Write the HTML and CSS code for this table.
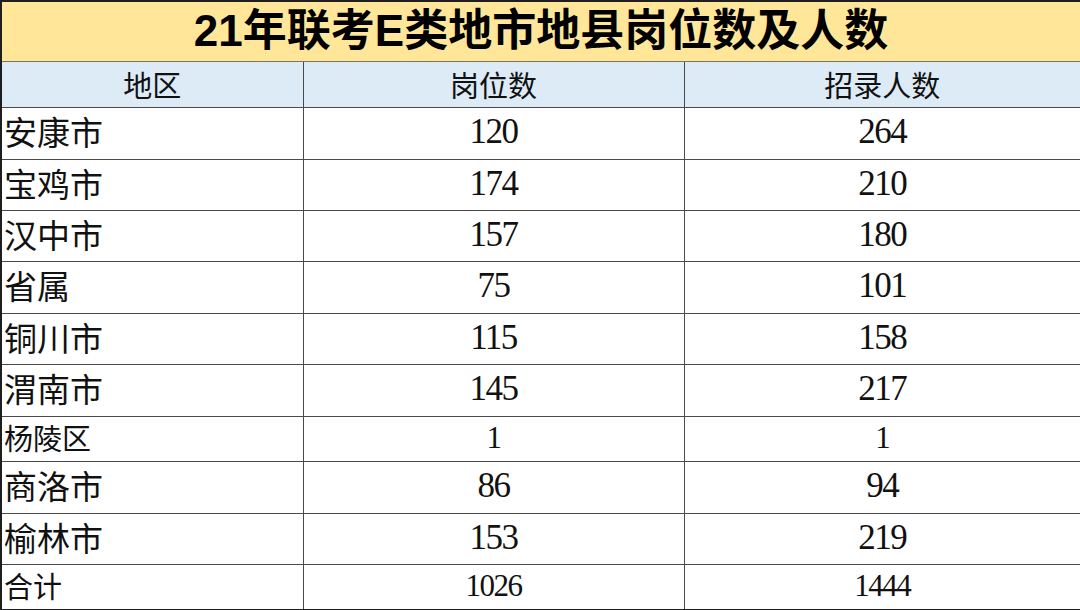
FILE: index.html
```html
<!DOCTYPE html>
<html lang="zh-CN">
<head>
<meta charset="utf-8">
<title>21年联考E类地市地县岗位数及人数</title>
<link rel="stylesheet" href="styles.css">
</head>
<body>
<table class="sheet">
  <colgroup>
    <col class="c-region">
    <col class="c-posts">
    <col class="c-people">
  </colgroup>
  <tr class="title-row"><th colspan="3" class="title">21年联考E类地市地县岗位数及人数</th></tr>
  <tr class="head-row"><th>地区</th><th>岗位数</th><th>招录人数</th></tr>
  <tr class="h52"><td class="name">安康市</td><td class="num">120</td><td class="num">264</td></tr>
  <tr class="h51"><td class="name">宝鸡市</td><td class="num">174</td><td class="num">210</td></tr>
  <tr class="h51"><td class="name">汉中市</td><td class="num">157</td><td class="num">180</td></tr>
  <tr class="h52"><td class="name">省属</td><td class="num">75</td><td class="num">101</td></tr>
  <tr class="h51"><td class="name">铜川市</td><td class="num">115</td><td class="num">158</td></tr>
  <tr class="h52"><td class="name">渭南市</td><td class="num">145</td><td class="num">217</td></tr>
  <tr class="h45 small"><td class="name">杨陵区</td><td class="num">1</td><td class="num">1</td></tr>
  <tr class="h52"><td class="name">商洛市</td><td class="num">86</td><td class="num">94</td></tr>
  <tr class="h51"><td class="name">榆林市</td><td class="num">153</td><td class="num">219</td></tr>
  <tr class="h46 small"><td class="name">合计</td><td class="num">1026</td><td class="num">1444</td></tr>
</table>
</body>
</html>
```

FILE: styles.css
```css
html, body {
  margin: 0;
  padding: 0;
  background: #ffffff;
}

.sheet {
  width: 1080px;
  border-collapse: collapse;
  table-layout: fixed;
  border: 2px solid #1e1e1e;
  font-family: "Liberation Serif", "Noto Sans CJK SC", serif;
  color: #111;
}

.c-region { width: 302px; }
.c-posts { width: 381px; }
.c-people { width: 397px; }

.sheet th,
.sheet td {
  border: 1px solid #4a4a4a;
  padding: 0 0 2px 0;
  text-align: center;
  vertical-align: middle;
  font-weight: normal;
  line-height: 1.2;
  white-space: nowrap;
}

.title-row { height: 60px; }

.sheet th.title {
  background: #ffe699;
  font-family: "Liberation Sans", "Noto Sans CJK SC", sans-serif;
  font-weight: 700;
  font-size: 44px;
  line-height: 1.2;
  color: #000;
  padding: 0;
  border-bottom: 1px solid #7d7560;
}

.head-row { height: 46px; }

.head-row th {
  background: #ddebf7;
  font-family: "Noto Sans CJK SC", sans-serif;
  font-size: 29px;
  font-weight: 400;
  padding: 0;
}

.h52 { height: 52px; }
.h51 { height: 51px; }
.h46 { height: 46px; }
.h45 { height: 45px; }

.sheet td.name {
  text-align: left;
  padding-left: 2px;
  font-family: "Noto Sans CJK SC", sans-serif;
  font-size: 33px;
}

.sheet td.num {
  font-size: 35px;
  letter-spacing: -1.5px;
}

.small td.name {
  font-size: 29px;
}

.small td.num {
  font-size: 31px;
  letter-spacing: -1.5px;
}
```
